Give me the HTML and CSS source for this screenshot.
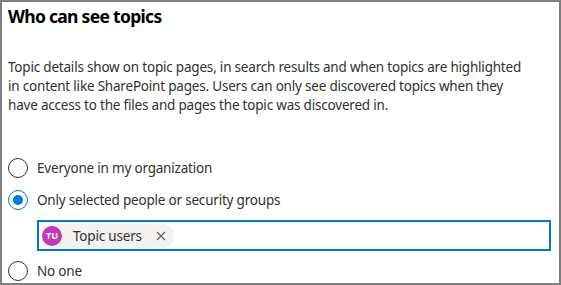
FILE: index.html
```html
<!DOCTYPE html>
<html lang="en">
<head>
<meta charset="utf-8">
<title>Who can see topics</title>
<link rel="stylesheet" href="styles.css">
</head>
<body>
<div class="panel">
  <h2 class="title">Who can see topics</h2>
  <p class="desc">Topic details show on topic pages, in search results and when topics are highlighted in content like SharePoint pages. Users can only see discovered topics when they have access to the files and pages the topic was discovered in.</p>
  <div class="choices">
    <div class="choice">
      <span class="radio"></span>
      <span class="label">Everyone in my organization</span>
    </div>
    <div class="choice">
      <span class="radio checked"></span>
      <span class="label">Only selected people or security groups</span>
    </div>
    <div class="picker">
      <div class="chip">
        <span class="coin">TU</span>
        <span class="chip-text">Topic users</span>
        <svg class="chip-x" width="10" height="10" viewBox="0 0 10 10"><path d="M1 1 L9 9 M9 1 L1 9" stroke="#605e5c" stroke-width="1.1" fill="none"/></svg>
      </div>
    </div>
    <div class="choice">
      <span class="radio"></span>
      <span class="label">No one</span>
    </div>
  </div>
</div>
</body>
</html>
```

FILE: styles.css
```css
html, body {
  margin: 0;
  padding: 0;
  background: #ffffff;
}
.panel {
  box-sizing: border-box;
  width: 561px;
  height: 285px;
  border: 2px solid #7f7f7f;
  padding: 0 6px;
  font-family: "Noto Sans", "Open Sans", sans-serif;
  color: #323130;
  overflow: hidden;
}
.title {
  margin: 0;
  font-size: 17.5px;
  line-height: 28px;
  font-weight: 700;
  letter-spacing: -0.7px;
  color: #000000;
}
.desc {
  margin: 28px 0 0 0;
  font-size: 13.5px;
  letter-spacing: -0.2px;
  line-height: 19px;
  width: 520px;
}
.choices {
  display: flex;
  flex-direction: column;
  margin-top: 43px;
}
.choice {
  display: flex;
  align-items: center;
  height: 20px;
  gap: 9px;
  font-size: 13.5px;
  letter-spacing: -0.2px;
}
.choice + .choice {
  margin-top: 12px;
}
.radio {
  box-sizing: border-box;
  width: 20px;
  height: 20px;
  border: 1px solid #323130;
  border-radius: 50%;
  flex: none;
  display: flex;
  align-items: center;
  justify-content: center;
}
.radio.checked {
  border-color: #0078d4;
}
.radio.checked::after {
  content: "";
  width: 10px;
  height: 10px;
  border-radius: 50%;
  background: #0078d4;
}
.picker {
  box-sizing: border-box;
  margin: 10px 2px 10px 29px;
  height: 31px;
  border: 2px solid #0078d4;
  display: flex;
  align-items: center;
  padding-left: 1px;
}
.chip {
  display: flex;
  align-items: center;
  height: 24px;
  background: #f3f2f1;
  border-radius: 12px;
  padding-right: 8px;
}
.coin {
  width: 20px;
  height: 20px;
  margin-left: 2px;
  border-radius: 50%;
  background: #c239b3;
  color: #ffffff;
  font-size: 9px;
  font-weight: 700;
  display: flex;
  align-items: center;
  justify-content: center;
}
.chip-text {
  margin-left: 11px;
  font-size: 13.5px;
  letter-spacing: -0.2px;
}
.chip-x {
  margin-left: 14px;
}
```
